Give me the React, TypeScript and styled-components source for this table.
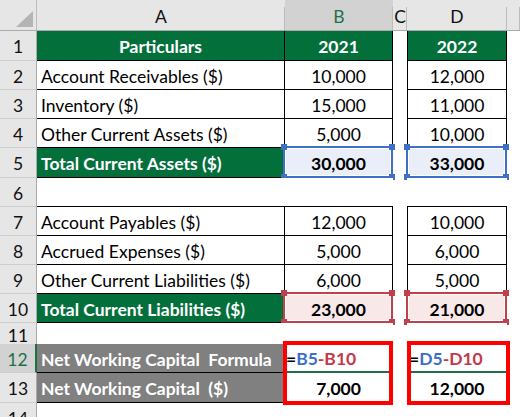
import React from 'react';
import styled, { createGlobalStyle } from 'styled-components';

const Global = createGlobalStyle`
  html, body { margin: 0; padding: 0; background: #fff; }
  body { width: 520px; height: 417px; overflow: hidden; font-family: Lato, "Noto Sans", sans-serif; }
  * { box-sizing: border-box; }
`;

const COLS = '37px 248px 108px 14px 100px 1fr';
const FS = 17.5;
const GREEN = '#03703c';
const SEL = '#1e7145';

const Sheet = styled.div`
  display: flex;
  flex-direction: column;
  width: 520px;
  height: 417px;
  overflow: hidden;
`;

const Line = styled.div<{ $h: number }>`
  display: grid;
  grid-template-columns: ${COLS};
  height: ${p => p.$h}px;
  flex: 0 0 auto;
`;

const Corner = styled.div`
  background: #e6e6e6;
  border-bottom: 1px solid #ababab;
  border-right: 1px solid #bcbcbc;
  display: flex;
  align-items: flex-end;
  justify-content: flex-end;
  padding: 0 3px 3px 0;
`;

const Triangle = styled.span`
  width: 0;
  height: 0;
  border-left: 17px solid transparent;
  border-bottom: 16px solid #b4b4b4;
`;

const ColHead = styled.div<{ $sel?: boolean }>`
  background-color: ${p => (p.$sel ? '#d2d2d2' : '#e6e6e6')};
  background-image: linear-gradient(#bcbcbc, #bcbcbc);
  background-size: 1px 23px;
  background-position: right bottom;
  background-repeat: no-repeat;
  border-bottom: 1px solid #ababab;
  display: flex;
  align-items: center;
  justify-content: center;
  padding-top: 2px;
  font-size: ${FS}px;
  color: ${p => (p.$sel ? SEL : '#111')};
`;

const RowHead = styled.div<{ $sel?: boolean }>`
  background: ${p => (p.$sel ? '#d2d2d2' : '#e6e6e6')};
  border-right: ${p => (p.$sel ? `2px solid ${SEL}` : '1px solid #ababab')};
  border-bottom: 1px solid #cdcdcd;
  display: flex;
  align-items: center;
  justify-content: center;
  padding-top: 2px;
  font-size: ${FS}px;
  color: ${p => (p.$sel ? SEL : '#111')};
`;

type Edge = 'box' | 'under' | 'none';

const Cell = styled.div<{
  $fill?: string;
  $color?: string;
  $bold?: boolean;
  $center?: boolean;
  $edge?: Edge;
  $lead?: boolean;
  $under?: string;
}>`
  position: relative;
  display: flex;
  align-items: center;
  justify-content: ${p => (p.$center ? 'center' : 'flex-start')};
  padding: 2px 0 0 ${p => (p.$center ? 0 : 4)}px;
  background: ${p => p.$fill ?? '#fff'};
  color: ${p => p.$color ?? '#000'};
  font-weight: ${p => (p.$bold ? 700 : 400)};
  font-size: ${FS}px;
  white-space: pre;
  border-bottom: ${p => (p.$under ? `2px solid ${p.$under}` : p.$edge && p.$edge !== 'none' ? '1px solid #000' : '0')};
  border-right: ${p => (p.$edge === 'box' ? '1px solid #000' : '0')};
  border-left: ${p => (p.$lead && p.$edge === 'box' ? '1px solid #000' : '0')};
`;

const Highlight = styled.span<{ $c: string; $fill: string }>`
  position: absolute;
  top: -2px;
  left: -2px;
  right: -1px;
  bottom: -1px;
  border: 2px solid ${p => p.$c};
  background: ${p => p.$fill};
  box-shadow: inset 0 0 0 1px #fff;
  z-index: 0;
`;

const Handle = styled.span<{ $c: string; $pos: 'tl' | 'tr' | 'bl' | 'br' }>`
  position: absolute;
  width: 6px;
  height: 6px;
  background: ${p => p.$c};
  ${p => (p.$pos[0] === 't' ? 'top: -4px;' : 'bottom: -4px;')}
  ${p => (p.$pos[1] === 'l' ? 'left: -4px;' : 'right: -4px;')}
`;

const CellText = styled.span`
  position: relative;
  z-index: 1;
`;

const RedBox = styled.span<{ $l: number; $w: number }>`
  position: absolute;
  top: -3px;
  left: ${p => p.$l}px;
  width: ${p => p.$w}px;
  height: 64px;
  border: 4px solid #ff0000;
  z-index: 3;
  pointer-events: none;
`;

const Ref = styled.span<{ $c: string }>`
  color: ${p => p.$c};
`;

const BLUE = '#3b6fc9';
const RED = '#c23a4a';

type Spec = {
  text?: React.ReactNode;
  fill?: string;
  color?: string;
  bold?: boolean;
  center?: boolean;
  edge?: Edge;
  hl?: 'blue' | 'red';
  under?: string;
  box?: { l: number; w: number };
};

type RowSpec = { n: number; h: number; sel?: boolean; a: Spec; b: Spec; d: Spec };

const g = (text: string, center = false): Spec => ({ text, fill: GREEN, color: '#fff', bold: true, center, edge: 'box' });
const p = (text: string, center = false): Spec => ({ text, center, edge: 'box' });
const total = (text: string, hl: 'blue' | 'red'): Spec => ({ text, bold: true, center: true, edge: 'box', hl });
const gray = (text: string): Spec => ({ text, fill: '#808080', color: '#fff', bold: true, edge: 'box' });

const rows: RowSpec[] = [
  { n: 1, h: 30, a: g('Particulars', true), b: g('2021', true), d: g('2022', true) },
  { n: 2, h: 29, a: p('Account Receivables ($)'), b: p('10,000', true), d: p('12,000', true) },
  { n: 3, h: 29, a: p('Inventory ($)'), b: p('15,000', true), d: p('11,000', true) },
  { n: 4, h: 29, a: p('Other Current Assets ($)'), b: p('5,000', true), d: p('10,000', true) },
  { n: 5, h: 30, a: g('Total Current Assets ($)'), b: total('30,000', 'blue'), d: total('33,000', 'blue') },
  { n: 6, h: 29, a: { edge: 'under' }, b: { edge: 'under' }, d: { edge: 'under' } },
  { n: 7, h: 29, a: p('Account Payables ($)'), b: p('12,000', true), d: p('10,000', true) },
  { n: 8, h: 29, a: p('Accrued Expenses ($)'), b: p('5,000', true), d: p('6,000', true) },
  { n: 9, h: 29, a: p('Other Current Liabilities ($)'), b: p('6,000', true), d: p('5,000', true) },
  { n: 10, h: 29, a: g('Total Current Liabilities ($)'), b: total('23,000', 'red'), d: total('21,000', 'red') },
  { n: 11, h: 21, a: { edge: 'under' }, b: { edge: 'none' }, d: { edge: 'none' } },
  {
    n: 12,
    h: 29,
    sel: true,
    a: gray('Net Working Capital  Formula'),
    b: {
      text: (
        <>
          =<Ref $c={BLUE}>B5</Ref>
          <Ref $c={RED}>-B10</Ref>
        </>
      ),
      bold: true,
      edge: 'box',
      under: SEL,
      box: { l: -2, w: 110 },
    },
    d: {
      text: (
        <>
          =<Ref $c={BLUE}>D5</Ref>
          <Ref $c={RED}>-D10</Ref>
        </>
      ),
      bold: true,
      edge: 'box',
      under: SEL,
      box: { l: -1, w: 103 },
    },
  },
  { n: 13, h: 30, a: gray('Net Working Capital  ($)'), b: total('7,000', undefined as any), d: total('12,000', undefined as any) },
];

const hlColors = {
  blue: { c: '#3e70c8', fill: '#e9eef8' },
  red: { c: '#c0404c', fill: '#f8e8e8' },
};

function DataCell({ s, lead }: { s: Spec; lead?: boolean }) {
  const hl = s.hl ? hlColors[s.hl] : null;
  return (
    <Cell
      $fill={s.fill}
      $color={s.color}
      $bold={s.bold}
      $center={s.center}
      $edge={s.edge ?? 'none'}
      $lead={lead}
      $under={s.under}
      style={s.box ? { paddingLeft: 1 } : undefined}
    >
      {hl && (
        <Highlight $c={hl.c} $fill={hl.fill}>
          <Handle $c={hl.c} $pos="tl" />
          <Handle $c={hl.c} $pos="tr" />
          <Handle $c={hl.c} $pos="bl" />
          <Handle $c={hl.c} $pos="br" />
        </Highlight>
      )}
      <CellText>{s.text}</CellText>
      {s.box && <RedBox $l={s.box.l} $w={s.box.w} />}
    </Cell>
  );
}

const Blank = styled.div`
  background: #fff;
`;

export default function App() {
  return (
    <>
      <Global />
      <Sheet>
        <Line $h={31}>
          <Corner>
            <Triangle />
          </Corner>
          <ColHead>A</ColHead>
          <ColHead $sel>B</ColHead>
          <ColHead>C</ColHead>
          <ColHead>D</ColHead>
          <ColHead />
        </Line>
        {rows.map(r => (
          <Line key={r.n} $h={r.h}>
            <RowHead $sel={r.sel}>{r.n}</RowHead>
            <DataCell s={r.a} />
            <DataCell s={r.b} />
            <Blank />
            <DataCell s={r.d} lead />
            <Blank />
          </Line>
        ))}
        <Line $h={30}>
          <RowHead>14</RowHead>
          <Blank />
          <Blank />
          <Blank />
          <Blank />
          <Blank />
        </Line>
      </Sheet>
    </>
  );
}
